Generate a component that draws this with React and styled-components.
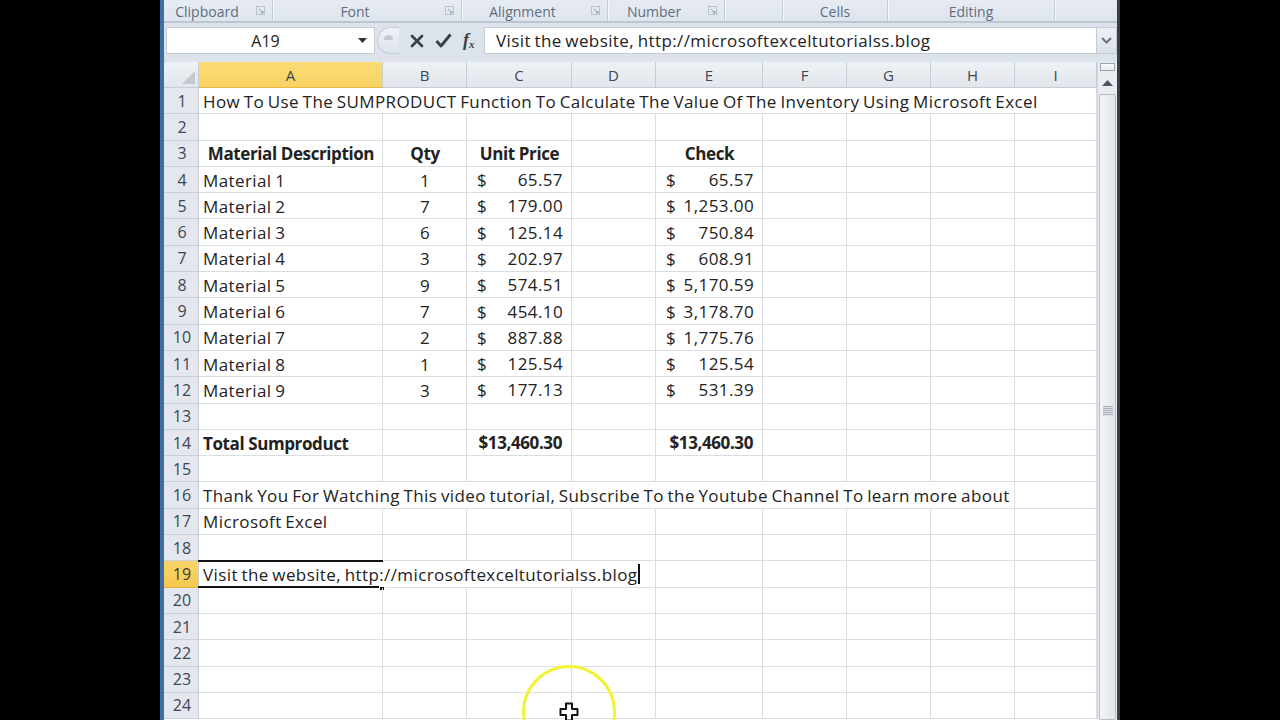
import React from 'react';
import styled, { createGlobalStyle } from 'styled-components';

const GlobalStyle = createGlobalStyle`
  html, body {
    margin: 0;
    padding: 0;
    background: #000;
  }
  * {
    box-sizing: border-box;
  }
`;

const UI_FONT = `'Open Sans', 'DejaVu Sans', sans-serif`;

const COLUMNS = ['A', 'B', 'C', 'D', 'E', 'F', 'G', 'H', 'I'];
const COL_WIDTHS = [184, 84, 105, 84, 107, 84, 84, 84, 82];

const GROUPS = [
  { label: 'Clipboard', width: 107, launcher: true },
  { label: 'Font', width: 189, launcher: true },
  { label: 'Alignment', width: 146, launcher: true },
  { label: 'Number', width: 117, launcher: true },
  { label: '', width: 58 },
  { label: 'Cells', width: 105 },
  { label: 'Editing', width: 167 },
];

const MATERIALS = [
  ['1', '65.57', '65.57'],
  ['7', '179.00', '1,253.00'],
  ['6', '125.14', '750.84'],
  ['3', '202.97', '608.91'],
  ['9', '574.51', '5,170.59'],
  ['7', '454.10', '3,178.70'],
  ['2', '887.88', '1,775.76'],
  ['1', '125.54', '125.54'],
  ['3', '177.13', '531.39'],
];

const URL_TEXT = 'Visit the website, http://microsoftexceltutorialss.blog';

// row number -> { column: cell }
const buildRows = () => {
  const rows = {};
  rows[1] = {
    A: {
      text: 'How To Use The SUMPRODUCT Function To Calculate The Value Of The Inventory Using Microsoft Excel',
      span: 9,
    },
  };
  rows[3] = {
    A: { text: 'Material Description', bold: true, align: 'center' },
    B: { text: 'Qty', bold: true, align: 'center' },
    C: { text: 'Unit Price', bold: true, align: 'center' },
    E: { text: 'Check', bold: true, align: 'center' },
  };
  MATERIALS.forEach(([qty, price, check], i) => {
    rows[4 + i] = {
      A: { text: `Material ${i + 1}` },
      B: { text: qty, align: 'center' },
      C: { money: price },
      E: { money: check },
    };
  });
  rows[14] = {
    A: { text: 'Total Sumproduct', bold: true },
    C: { text: '$13,460.30', bold: true, align: 'flex-end' },
    E: { text: '$13,460.30', bold: true, align: 'flex-end' },
  };
  rows[16] = {
    A: {
      text: 'Thank You For Watching This video tutorial, Subscribe To the Youtube Channel To learn more about',
      span: 8,
    },
  };
  rows[17] = { A: { text: 'Microsoft Excel' } };
  rows[19] = { A: { text: URL_TEXT, span: 4, selected: true } };
  return rows;
};

const ROWS = buildRows();

const LauncherIcon = () => (
  <svg width="9" height="9" viewBox="0 0 9 9">
    <rect x="0.5" y="0.5" width="8" height="8" fill="none" stroke="#b9c2cd" />
    <path d="M3 3 L7 7 M5 7 H7 V5" stroke="#8d99a8" strokeWidth="1" fill="none" />
  </svg>
);

const DropArrow = () => (
  <svg width="9" height="5" viewBox="0 0 9 5">
    <path d="M0 0 H9 L4.5 5 Z" fill="#333" />
  </svg>
);

const CancelIcon = () => (
  <svg width="14" height="14" viewBox="0 0 14 14">
    <path d="M2 2 L12 12 M12 2 L2 12" stroke="#3a3f46" strokeWidth="2.6" strokeLinecap="round" />
  </svg>
);

const EnterIcon = () => (
  <svg width="17" height="15" viewBox="0 0 17 15">
    <path d="M1.5 8 L6 13 L15.5 1.5" stroke="#3a3f46" strokeWidth="2.8" fill="none" strokeLinejoin="round" />
  </svg>
);

const ChevronDown = () => (
  <svg width="11" height="7" viewBox="0 0 11 7">
    <path d="M1 1 L5.5 5.5 L10 1" stroke="#6b7480" strokeWidth="2" fill="none" />
  </svg>
);

const UpTriangle = () => (
  <svg width="11" height="6" viewBox="0 0 11 6">
    <path d="M0 6 L5.5 0 L11 6 Z" fill="#4d5560" />
  </svg>
);

const MoveCursor = () => (
  <svg width="20" height="20" viewBox="0 0 20 20">
    <path
      d="M7 1.5 H13 V7 H18.5 V13 H13 V18.5 H7 V13 H1.5 V7 H7 Z"
      fill="#fff"
      stroke="#111"
      strokeWidth="2"
      strokeLinejoin="round"
    />
  </svg>
);

const renderCell = (row, col, cell) => {
  if (!cell) return <Cell key={col} />;
  if (cell.money) {
    return (
      <Cell key={col} $align="space-between" $pad="0 8px 0 10px">
        <span>$</span>
        <span>{cell.money}</span>
      </Cell>
    );
  }
  return (
    <Cell
      key={col}
      $span={cell.span}
      $align={cell.align}
      $bold={cell.bold}
      $pad={cell.align === 'flex-end' ? '0 9px' : undefined}
    >
      {cell.text}
      {cell.selected && (
        <>
          <Caret />
          <Selection />
          <FillHandle />
        </>
      )}
    </Cell>
  );
};

const renderRow = (row) => {
  const data = ROWS[row] || {};
  const cells = [];
  let skip = 0;
  COLUMNS.forEach((col) => {
    if (skip > 0) {
      skip -= 1;
      return;
    }
    const cell = data[col];
    if (cell && cell.span) skip = cell.span - 1;
    cells.push(renderCell(row, col, cell));
  });
  return (
    <React.Fragment key={row}>
      <RowHeader $active={row === 19}>{row}</RowHeader>
      {cells}
    </React.Fragment>
  );
};

const App = () => {
  const rowNumbers = Array.from({ length: 24 }, (_, i) => i + 1);
  return (
    <>
      <GlobalStyle />
      <Screen>
        <Window>
          <GroupBar>
            {GROUPS.map((g, i) => (
              <Group key={i} $width={g.width}>
                <GroupLabel>{g.label}</GroupLabel>
                {g.launcher && (
                  <Launcher>
                    <LauncherIcon />
                  </Launcher>
                )}
              </Group>
            ))}
          </GroupBar>

          <FormulaArea>
            <NameBox>
              <NameText>A19</NameText>
              <NameDrop>
                <DropArrow />
              </NameDrop>
            </NameBox>
            <Grip>
              <GripDot />
            </Grip>
            <FormulaButtons>
              <CancelIcon />
              <EnterIcon />
              <FxLabel>
                f<sub>x</sub>
              </FxLabel>
            </FormulaButtons>
            <FormulaInput>{URL_TEXT}</FormulaInput>
            <ExpandButton>
              <ChevronDown />
            </ExpandButton>
          </FormulaArea>

          <SheetArea>
            <Sheet>
              <Corner>
                <CornerTriangle />
              </Corner>
              {COLUMNS.map((c) => (
                <ColHeader key={c} $active={c === 'A'}>
                  {c}
                </ColHeader>
              ))}
              {rowNumbers.map(renderRow)}
            </Sheet>
            <ScrollBar>
              <SplitBox />
              <ScrollButton>
                <UpTriangle />
              </ScrollButton>
              <Thumb>
                <ThumbGrip />
              </Thumb>
            </ScrollBar>
          </SheetArea>
        </Window>

        <Highlight>
          <MoveCursor />
        </Highlight>
      </Screen>
    </>
  );
};

const Screen = styled.div`
  position: relative;
  width: 1280px;
  height: 720px;
  overflow: hidden;
  background: #000;
  display: flex;
  padding-left: 160px;
`;

const Window = styled.div`
  width: 960px;
  height: 720px;
  display: flex;
  flex-direction: column;
  overflow: hidden;
  background: #dfe5ec;
  border-left: 4px solid #3d6ea5;
  border-right: 3px solid #3a3d42;
  box-shadow: inset 2px 0 0 #c9d3df;
  font-family: ${UI_FONT};
`;

const GroupBar = styled.div`
  display: flex;
  height: 23px;
  flex-shrink: 0;
  padding-left: 2px;
  background: linear-gradient(#e6ebf2, #dfe5ed);
  border-bottom: 2px solid #bcc6d2;
`;

const Group = styled.div`
  width: ${(p) => p.$width}px;
  display: flex;
  align-items: center;
  border-right: 1px solid #c3ccd7;
  box-shadow: 1px 0 0 #f4f7fa;
`;

const GroupLabel = styled.div`
  flex: 1;
  text-align: center;
  font-size: 14px;
  color: #5f6d80;
  padding-top: 1px;
`;

const Launcher = styled.div`
  width: 24px;
  display: flex;
  justify-content: center;
  align-items: center;
`;

const FormulaArea = styled.div`
  height: 37px;
  flex-shrink: 0;
  display: flex;
  align-items: stretch;
  padding: 4px 0 6px 2px;
  background: #dde3ea;
`;

const NameBox = styled.div`
  width: 209px;
  display: flex;
  align-items: center;
  background: #fff;
  border: 1px solid #c4ccd6;
`;

const NameText = styled.div`
  flex: 1;
  text-align: center;
  font-size: 16px;
  color: #222;
  padding-left: 14px;
`;

const NameDrop = styled.div`
  width: 24px;
  display: flex;
  justify-content: center;
`;

const Grip = styled.div`
  width: 22px;
  margin-left: 2px;
  display: flex;
  align-items: center;
  justify-content: center;
  border: 1px solid #c4ccd6;
  border-right: none;
  border-radius: 14px 0 0 14px;
  background: linear-gradient(#eef1f5, #dde3ea);
`;

const GripDot = styled.div`
  width: 9px;
  height: 5px;
  border-radius: 5px 5px 0 0;
  background: #c2c9d2;
  margin-bottom: 6px;
`;

const FormulaButtons = styled.div`
  width: 86px;
  display: flex;
  align-items: center;
  justify-content: space-around;
  padding: 0 4px 0 5px;
  border-right: 1px solid #c4ccd6;
`;

const FxLabel = styled.span`
  font-family: 'Liberation Serif', serif;
  font-style: italic;
  font-weight: bold;
  font-size: 18px;
  color: #3a3f46;
  sub {
    font-size: 11px;
    vertical-align: -2px;
  }
`;

const FormulaInput = styled.div`
  flex: 1;
  display: flex;
  align-items: center;
  padding-left: 11px;
  background: #fff;
  border: 1px solid #c4ccd6;
  border-left: none;
  font-size: 17px;
  letter-spacing: 0.4px;
  word-spacing: -1.2px;
  color: #222;
  white-space: nowrap;
`;

const ExpandButton = styled.div`
  width: 20px;
  display: flex;
  justify-content: center;
  align-items: center;
  background: linear-gradient(#eef1f5, #dbe1e8);
  border: 1px solid #c4ccd6;
  border-left: none;
`;

const SheetArea = styled.div`
  flex: 1;
  display: flex;
  min-height: 0;
  margin-top: 2px;
`;

const Sheet = styled.div`
  flex: 1;
  display: grid;
  grid-template-columns: 35px ${COL_WIDTHS.map((w) => `${w}px`).join(' ')};
  grid-template-rows: 26px;
  grid-auto-rows: 26.3px;
  align-content: start;
  background: #fff;
  overflow: hidden;
  font-family: ${UI_FONT};
`;

const HeaderBase = styled.div`
  display: flex;
  align-items: center;
  justify-content: center;
  color: #3b4656;
  background: linear-gradient(#eef1f5, #e2e6ec);
  border-right: 1px solid #c7cdd4;
  border-bottom: 1px solid #c7cdd4;
`;

const Corner = styled(HeaderBase)`
  justify-content: flex-end;
  align-items: flex-end;
  padding: 0 3px 3px 0;
`;

const CornerTriangle = styled.div`
  width: 0;
  height: 0;
  border-left: 13px solid transparent;
  border-bottom: 13px solid #c3c9d0;
`;

const ColHeader = styled(HeaderBase)`
  font-size: 15px;
  background: ${(p) => (p.$active ? 'linear-gradient(#fbdc74, #f7d262)' : 'linear-gradient(#eef1f5, #e2e6ec)')};
  border-bottom-color: ${(p) => (p.$active ? '#e8b84a' : '#c7cdd4')};
`;

const RowHeader = styled(HeaderBase)`
  font-size: 16px;
  padding-left: 2px;
  background: ${(p) => (p.$active ? 'linear-gradient(#f9d56a, #f4c84e)' : '#e4e8ee')};
  border-bottom-color: ${(p) => (p.$active ? '#e3b140' : '#c9cfd6')};
  color: ${(p) => (p.$active ? '#3b3b3b' : '#3b4656')};
`;

const Cell = styled.div`
  position: relative;
  grid-column: span ${(p) => p.$span || 1};
  display: flex;
  align-items: center;
  justify-content: ${(p) => p.$align || 'flex-start'};
  padding: ${(p) => p.$pad || '1px 3px 0 4px'};
  border-right: 1px solid #dadde1;
  border-bottom: 1px solid #dadde1;
  font-size: 17px;
  font-weight: ${(p) => (p.$bold ? 700 : 400)};
  letter-spacing: ${(p) => (p.$bold ? '-0.4px' : '0.4px')};
  word-spacing: ${(p) => (p.$bold ? '0' : '-1.2px')};
  color: #222;
  white-space: nowrap;
`;

const Caret = styled.span`
  display: inline-block;
  width: 1.5px;
  height: 20px;
  margin-left: 1px;
  background: #111;
`;

const Selection = styled.div`
  position: absolute;
  left: -1px;
  top: -1px;
  bottom: -1px;
  width: 185px;
  border-top: 2px solid #111;
  border-bottom: 2px solid #111;
  pointer-events: none;
`;

const FillHandle = styled.div`
  position: absolute;
  left: 180px;
  bottom: -4px;
  width: 6px;
  height: 5px;
  background: #111;
  border: 1px solid #fff;
`;

const ScrollBar = styled.div`
  width: 20px;
  display: flex;
  flex-direction: column;
  background: #e9edf2;
  border-left: 1px solid #cfd5dc;
`;

const SplitBox = styled.div`
  height: 8px;
  margin: 1px 2px 0;
  border: 1px solid #9aa4b0;
  background: linear-gradient(#fdfdfe, #e6eaef);
`;

const ScrollButton = styled.div`
  height: 23px;
  display: flex;
  align-items: center;
  justify-content: center;
`;

const Thumb = styled.div`
  flex: 1;
  margin: 0 1px;
  display: flex;
  justify-content: center;
  padding-top: 311px;
  border: 1px solid #b4bcc6;
  border-radius: 2px;
  background: linear-gradient(90deg, #f3f5f8, #e1e6ec);
`;

const ThumbGrip = styled.div`
  width: 10px;
  height: 10px;
  background: repeating-linear-gradient(#a9b0b9 0 1px, #dfe3e8 1px 2px);
`;

const Highlight = styled.div`
  position: absolute;
  left: 522px;
  top: 665px;
  width: 94px;
  height: 94px;
  border: 3px solid #f2f23a;
  border-radius: 50%;
  display: flex;
  justify-content: center;
  padding-top: 34px;
`;

export default App;
